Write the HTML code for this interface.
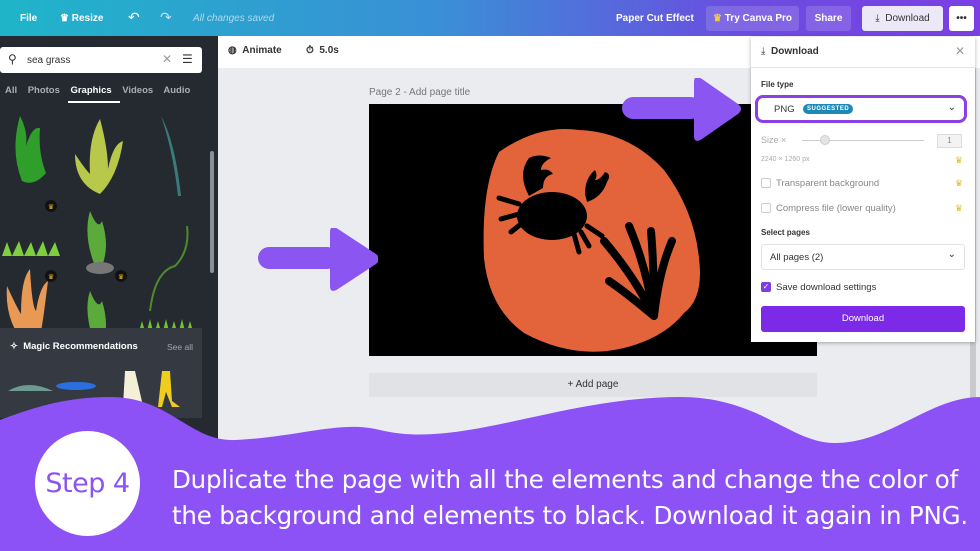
<!DOCTYPE html>
<html><head><meta charset="utf-8"><style>
*{margin:0;padding:0;box-sizing:border-box}
body{width:980px;height:551px;overflow:hidden;position:relative;font-family:"Liberation Sans",sans-serif;background:#ebecf0}
.abs{position:absolute}
.top{left:0;top:0;width:980px;height:36px;background:linear-gradient(90deg,#1fb5c9 0%,#3a8fd6 45%,#6a4ee0 75%,#7b3fe4 100%);color:#fff;font-size:10px;font-weight:bold}
.top span{position:absolute;top:13px}
.btn{position:absolute;top:6px;height:25px;border-radius:3px;display:flex;align-items:center;justify-content:center;font-size:10px;font-weight:bold}
.left{left:0;top:36px;width:218px;height:515px;background:#252a31}
.panel{left:751px;top:37px;width:224px;height:305px;background:#fff;box-shadow:0 1px 4px rgba(0,0,0,.3);font-size:9.5px;color:#333}
.cb{position:absolute;left:10px;width:10px;height:10px;border:1px solid #ccc;border-radius:2px}
.crown{position:absolute;right:12px;color:#e8b92c;font-size:9px}
</style></head><body>
<div class="abs top">
<span style="left:20px">File</span>
<span style="left:60px">♛ Resize</span>
<span style="left:128px;top:9px;font-size:14px;font-weight:normal">↶</span>
<span style="left:160px;top:9px;font-size:14px;font-weight:normal;opacity:.7">↷</span>
<span style="left:193px;font-style:italic;font-weight:normal;opacity:.6">All changes saved</span>
<span style="left:616px">Paper Cut Effect</span>
<div class="btn" style="left:706px;width:93px;background:rgba(255,255,255,.15)"><span style="position:static;color:#f3c94a">♛</span>&nbsp;Try Canva Pro</div>
<div class="btn" style="left:806px;width:45px;background:rgba(255,255,255,.15)">Share</div>
<div class="btn" style="left:862px;width:81px;background:#ece8f7;color:#333;font-weight:normal">⤓&nbsp; Download</div>
<div class="btn" style="left:949px;width:25px;background:#fff;color:#333">•••</div>
</div>
<div class="abs left">
<div class="abs" style="left:0;top:11px;width:202px;height:26px;background:#fff;border-radius:3px;font-size:10px;color:#333"><span class="abs" style="left:8px;top:5px;font-size:12px">⚲</span><span class="abs" style="left:27px;top:8px">sea grass</span><span class="abs" style="left:162px;top:5px;color:#999;font-size:12px">✕</span><span class="abs" style="left:182px;top:5px;font-size:12px">☰</span></div>
<div class="abs" style="top:49px;left:5px;font-size:9.5px;color:#a8aeb8;font-weight:bold;white-space:nowrap">All &nbsp;&nbsp; Photos &nbsp;&nbsp; <b style="color:#fff">Graphics</b> &nbsp;&nbsp; Videos &nbsp;&nbsp; Audio</div>
<div class="abs" style="left:68px;top:65px;width:52px;height:2px;background:#fff"></div>
<svg class="abs" style="left:0;top:70px" width="218" height="240">
<path d="M22 75 q-12-30 -2-65 q8 15 6 30 q6-20 14-18 q-2 25 6 45 q-12 14-24 8z" fill="#2f9e2b"/>
<path d="M100 88 q-25-10-25-40 q10 15 15 20 q-2-35 10-55 q8 30 8 50 q5-25 15-28 q-5 35-23 53z" fill="#b7c84a"/>
<path d="M178 90 q-5-45-17-80 q14 25 20 80z" fill="#3a7a7a"/>
<path d="M2 150 l5-14 5 14 7-15 5 15 7-14 5 14 7-15 5 15 7-14 5 14z" fill="#7fce3d"/>
<path d="M95 160 q-12-30-5-55 q8 20 12 10 q8 25 0 45z" fill="#5caa3a"/><ellipse cx="100" cy="162" rx="14" ry="6" fill="#777"/>
<path d="M150 205 q5-40 25-45 q15-15 12-40" stroke="#4d8a2a" stroke-width="2" fill="none"/>
<path d="M32 245 q-28-25-25-65 q10 22 14 28 q0-35 9-45 q2 38 6 42 q4-25 12-30 q-4 35-10 70z" fill="#e89a54"/>
<path d="M95 240 q-12-35-5-55 q8 20 12 10 q8 25 0 45z" fill="#5caa3a"/><ellipse cx="98" cy="236" rx="16" ry="7" fill="#777"/>
<path d="M138 229 l4-14 4 14 4-16 4 16 4-14 4 14 4-16 4 16 4-14 4 14 4-16 4 16 4-14 4 14z" fill="#6cc52d"/>
<circle cx="51" cy="100" r="6" fill="#111"/><circle cx="51" cy="170" r="6" fill="#111"/><circle cx="121" cy="170" r="6" fill="#111"/><circle cx="121" cy="240" r="6" fill="#111"/>
<text x="51" y="103" font-size="7" fill="#e8b92c" text-anchor="middle">♛</text><text x="51" y="173" font-size="7" fill="#e8b92c" text-anchor="middle">♛</text><text x="121" y="173" font-size="7" fill="#e8b92c" text-anchor="middle">♛</text>
</svg>
<div class="abs" style="left:210px;top:115px;width:4px;height:122px;background:#8a8f98;border-radius:2px"></div>
<div class="abs" style="left:0;top:292px;width:202px;height:90px;background:#353a42"></div>
<div class="abs" style="left:10px;top:305px;font-size:9.5px;color:#fff;font-weight:bold">✧ &nbsp;Magic Recommendations</div>
<div class="abs" style="left:167px;top:306px;font-size:8.5px;color:#9aa">See all</div>
<svg class="abs" style="left:0;top:330px" width="200" height="45"><path d="M8 25 q20-12 45 0z" fill="#6f9a92"/><ellipse cx="76" cy="20" rx="20" ry="4" fill="#2a6fe0"/><path d="M125 5 l10 0 8 35 -20 0z" fill="#f4f0d8"/><path d="M162 5 l8 0 2 30 8 6-8 0-6-15-4 15-4 0z" fill="#f0cd1c"/></svg>
</div>
<div class="abs" style="left:218px;top:36px;width:762px;height:32px;background:#fff;font-size:10px;color:#333;font-weight:bold"><span class="abs" style="left:10px;top:9px">◍ &nbsp;Animate</span><span class="abs" style="left:88px;top:9px">⏱ &nbsp;5.0s</span></div>
<div class="abs" style="left:369px;top:87px;font-size:10px;color:#777">Page 2 - Add page title</div>
<div class="abs" style="left:369px;top:104px;width:448px;height:252px;background:#000"></div>
<svg class="abs" style="left:369px;top:104px" width="448" height="252">
<path d="M130 48 q40-28 80-22 q50 2 85 40 q30 40 35 88 q5 40-15 55 q-20 25-60 35 q-50 12-100-15 q-35-25-40-75 q-3-70 15-106z" fill="#e3643b"/>
<ellipse cx="183" cy="112" rx="35" ry="24" fill="#000"/>
<path d="M160 92 q-12-22 0-38 q10-5 22 0 q-10 5-10 12 q8-2 12 4 q-10 2-10 14z" fill="#000"/>
<path d="M218 98 q15-5 20-20 q5-8 -2-10 q-5 8-10 8 q3-5 0-10 q-10 8-10 24z" fill="#000"/>
<path d="M150 100 l-20-6 M150 110 l-18 5 M152 120 l-10 8 M205 130 l5 18 M212 128 l8 14 M218 122 l15 10" stroke="#000" stroke-width="5" stroke-linecap="round"/>
<path d="M285 212 q-20-40-50-75 M285 212 q-8-50-25-90 M285 212 q0-50-3-85 M285 212 q5-45 18-75 M285 212 q-30-25-45-35" stroke="#000" stroke-width="8" stroke-linecap="round" fill="none"/>
</svg>
<div class="abs" style="left:369px;top:373px;width:448px;height:24px;background:#e0e2e6;font-size:10px;color:#333;text-align:center;line-height:24px">+ Add page</div>
<div class="abs" style="left:970px;top:68px;width:6px;height:330px;background:#c8cacd"></div>
<svg class="abs" style="left:258px;top:228px" width="120" height="64"><rect x="0" y="19" width="80" height="22" rx="11" fill="#8b55f2"/><path d="M72 4 q0-8 8-3 l38 25 q6 5 0 10 l-38 25 q-8 5-8-3z" fill="#8b55f2"/></svg>
<svg class="abs" style="left:620px;top:78px" width="122" height="64"><rect x="2" y="19" width="80" height="22" rx="11" fill="#8b55f2"/><path d="M74 4 q0-8 8-3 l36 25 q6 5 0 10 l-36 25 q-8 5-8-3z" fill="#8b55f2"/></svg>
<div class="abs panel">
<div class="abs" style="left:10px;top:9px;font-size:10px">⤓ &nbsp;<b>Download</b></div>
<div class="abs" style="right:10px;top:7px;font-size:12px;color:#999">✕</div>
<div class="abs" style="left:0;top:30px;width:224px;height:1px;background:#e5e5e5"></div>
<div class="abs" style="left:10px;top:43px;font-size:8px;font-weight:bold">File type</div>
<div class="abs" style="left:4px;top:58px;width:212px;height:28px;border:3px solid #8b3fe6;border-radius:8px;background:#fff"><span class="abs" style="left:16px;top:6px;font-size:9.5px">PNG</span><span class="abs" style="left:45px;top:6px;background:#1e89b8;color:#fff;font-size:6px;font-weight:bold;padding:2px 4px;border-radius:6px;letter-spacing:.5px">SUGGESTED</span><span class="abs" style="right:8px;top:4px;font-size:10px">⌄</span></div>
<div class="abs" style="left:10px;top:98px;font-size:9px;color:#aaa">Size ×</div>
<div class="abs" style="left:51px;top:103px;width:122px;height:1px;background:#ccc"></div>
<div class="abs" style="left:69px;top:98px;width:10px;height:10px;border-radius:50%;background:#e4e4e4;border:1px solid #ccc"></div>
<div class="abs" style="left:186px;top:97px;width:25px;height:14px;border:1px solid #ddd;background:#f3f3f3;font-size:8px;color:#888;text-align:center;line-height:12px">1</div>
<div class="abs" style="left:10px;top:119px;font-size:7px;color:#aaa">2240 × 1260 px</div><span class="crown" style="top:118px">♛</span>
<div class="cb" style="top:141px"></div><div class="abs" style="left:25px;top:141px;color:#888">Transparent background</div><span class="crown" style="top:141px">♛</span>
<div class="cb" style="top:166px"></div><div class="abs" style="left:25px;top:166px;color:#888">Compress file (lower quality)</div><span class="crown" style="top:166px">♛</span>
<div class="abs" style="left:10px;top:191px;font-size:8px;font-weight:bold">Select pages</div>
<div class="abs" style="left:10px;top:207px;width:204px;height:26px;border:1px solid #e2e2e2;border-radius:3px"><span class="abs" style="left:8px;top:7px">All pages (2)</span><span class="abs" style="right:8px;top:4px;font-size:10px">⌄</span></div>
<div class="abs" style="left:10px;top:245px;width:10px;height:10px;background:#7d3ee0;border-radius:2px;color:#fff;font-size:8px;line-height:10px;text-align:center">✓</div><div class="abs" style="left:25px;top:245px">Save download settings</div>
<div class="abs" style="left:10px;top:269px;width:204px;height:26px;background:#7d2ae8;border-radius:3px;color:#fff;text-align:center;line-height:26px">Download</div>
</div>
<svg class="abs" style="left:0;top:380px" width="980" height="171"><path d="M0 40 C40 25 70 17 110 17 C170 17 190 62 235 60 C300 57 340 40 380 50 C460 70 560 17 680 17 C760 17 790 63 835 63 C890 63 930 17 980 17 L980 171 L0 171Z" fill="#8c52f6"/></svg>
<div class="abs" style="left:35px;top:431px;width:105px;height:105px;border-radius:50%;background:#fff;color:#8c52f6;font-size:27px;text-align:center;line-height:105px;font-family:'DejaVu Sans',sans-serif;letter-spacing:-0.5px">Step 4</div>
<div class="abs" style="left:172px;top:462px;color:#fff;font-size:24.5px;line-height:36px;font-family:'DejaVu Sans',sans-serif;letter-spacing:-0.2px;white-space:nowrap">Duplicate the page with all the elements and change the color of<br>the background and elements to black. Download it again in PNG.</div>
</body></html>
